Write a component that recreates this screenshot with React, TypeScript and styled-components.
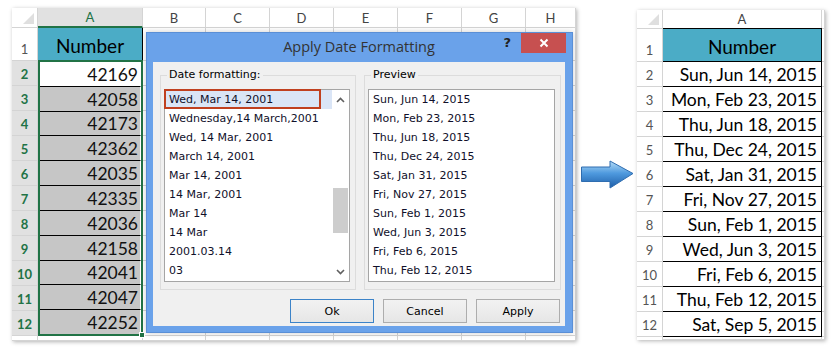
import React from "react";
import styled, { createGlobalStyle } from "styled-components";

const GlobalStyle = createGlobalStyle`
  html, body { margin: 0; padding: 0; background: #fff; }
  body { font-family: "Liberation Sans", Arial, sans-serif; }
  * { box-sizing: border-box; }
`;

const XL = `"Lato", "Open Sans", sans-serif`;
const WIN = `"DejaVu Sans", "Liberation Sans", sans-serif`;
const GREEN = "#217346";
const GRID = "#d4d4d4";

const Page = styled.div`
  display: flex;
  align-items: flex-start;
  padding: 8px 0 0 12px;
  width: 833px;
  height: 351px;
  overflow: hidden;
`;

const LeftArea = styled.div`
  position: relative;
  flex: none;
`;

const Sheet = styled.div<{ $cols: string; $rows: string; $mt?: number; $ml?: number }>`
  display: grid;
  grid-template-columns: ${(p) => p.$cols};
  grid-template-rows: ${(p) => p.$rows};
  background: #fff;
  box-shadow: 1px 1px 4px rgba(0, 0, 0, 0.3);
  margin-top: ${(p) => p.$mt ?? 0}px;
  margin-left: ${(p) => p.$ml ?? 0}px;
  flex: none;
  overflow: hidden;
`;

const Corner = styled.div`
  border-right: 1px solid ${GRID};
  border-bottom: 1px solid ${GRID};
  position: relative;
  background: #fff;
  &::after {
    content: "";
    position: absolute;
    right: 3px;
    bottom: 3px;
    border-left: 11px solid transparent;
    border-bottom: 11px solid #dfdfdf;
  }
`;

const ColHead = styled.div<{ $sel?: boolean }>`
  display: flex;
  align-items: center;
  justify-content: center;
  font-family: ${XL};
  font-size: 13px;
  color: ${(p) => (p.$sel ? GREEN : "#444")};
  background: ${(p) => (p.$sel ? "#e1e1e1" : "#fff")};
  border-right: 1px solid ${GRID};
  border-bottom: ${(p) => (p.$sel ? `2px solid ${GREEN}` : `1px solid ${GRID}`)};
`;

const RowHead = styled.div<{ $sel?: boolean }>`
  display: flex;
  align-items: flex-end;
  justify-content: center;
  padding-bottom: 3px;
  font-family: ${XL};
  font-size: 13px;
  font-weight: ${(p) => (p.$sel ? 700 : 400)};
  color: ${(p) => (p.$sel ? GREEN : "#555")};
  background: ${(p) => (p.$sel ? "#e1e1e1" : "#fff")};
  border-right: 1px solid ${GRID};
  border-bottom: 1px solid ${GRID};
`;

const Blank = styled.div`
  border-right: 1px solid ${GRID};
  border-bottom: 1px solid ${GRID};
`;

const TitleCell = styled.div`
  display: flex;
  align-items: center;
  justify-content: center;
  padding-top: 2px;
  background: #4bacc6;
  font-family: ${XL};
  font-size: 19px;
  color: #000;
  border-right: 1px solid #000;
`;

const Selection = styled.div`
  grid-column: 2;
  grid-row: 3 / span 11;
  position: relative;
  display: flex;
  flex-direction: column;
  border: 2px solid ${GREEN};
  margin: -1px 0 0 0;
`;

const NumCell = styled.div<{ $active?: boolean }>`
  flex: 1;
  display: flex;
  align-items: flex-end;
  justify-content: flex-end;
  padding: 0 2px 1px 0;
  font-family: ${XL};
  font-size: 17.5px;
  white-space: nowrap;
  color: #111;
  background: ${(p) => (p.$active ? "#fff" : "#c6c6c6")};
  border-right: 1px solid #fff;
  & + & {
    border-top: 1px solid #000;
  }
`;

const FillHandle = styled.div`
  position: absolute;
  right: -4px;
  bottom: -4px;
  width: 6px;
  height: 6px;
  background: ${GREEN};
  border: 1px solid #fff;
`;

const Table = styled.div`
  grid-column: 2;
  grid-row: 2 / span 12;
  display: flex;
  flex-direction: column;
  border: 1px solid #000;
  margin: -1px 0 0 -1px;
`;

const TableHead = styled.div`
  height: 33px;
  flex: none;
  display: flex;
  align-items: center;
  justify-content: center;
  padding-top: 2px;
  background: #4bacc6;
  font-family: ${XL};
  font-size: 19px;
  color: #000;
  border-bottom: 1px solid #000;
`;

const DateCell = styled.div`
  flex: 1;
  display: flex;
  align-items: flex-end;
  justify-content: flex-end;
  padding: 0 4px 1px 0;
  font-family: ${XL};
  font-size: 17.5px;
  white-space: nowrap;
  color: #000;
  & + & {
    border-top: 1px solid #000;
  }
`;

/* ---------- dialog ---------- */

const Dialog = styled.div`
  position: absolute;
  left: 134px;
  top: 24px;
  width: 427px;
  height: 301px;
  display: flex;
  flex-direction: column;
  background: #6aa2ea;
  border: 1px solid #5a8fd6;
  padding: 0 7px 6px 6px;
  box-shadow: 0 0 6px rgba(0, 0, 0, 0.2);
`;

const TitleBar = styled.div`
  height: 29px;
  flex: none;
  display: grid;
  grid-template-columns: 1fr auto 1fr;
  align-items: start;
`;

const Title = styled.div`
  font-family: "Open Sans", "Noto Sans", sans-serif;
  font-size: 14.5px;
  line-height: 28px;
  color: #333;
`;

const Controls = styled.div`
  justify-self: end;
  display: flex;
  align-items: flex-start;
  gap: 10px;
  margin-right: -1px;
`;

const Help = styled.div`
  font-family: ${WIN};
  font-weight: 700;
  font-size: 13px;
  color: #222;
  line-height: 20px;
`;

const Close = styled.div`
  width: 45px;
  height: 20px;
  background: #c75050;
  display: flex;
  align-items: center;
  justify-content: center;
`;

const Client = styled.div`
  flex: 1;
  background: #f0f0f0;
  display: flex;
  flex-direction: column;
  padding: 6px 4px 3px 7px;
`;

const Groups = styled.div`
  display: flex;
  gap: 8px;
`;

const Group = styled.fieldset<{ $w: number }>`
  width: ${(p) => p.$w}px;
  height: 222px;
  margin: 0;
  padding: 7px 5px 7px 3px;
  border: 1px solid #dcdcdc;
  min-width: 0;
`;

const Legend = styled.legend`
  font-family: ${WIN};
  font-size: 11px;
  line-height: 14px;
  color: #000;
  padding: 0 2px;
  margin-left: 3px;
`;

const ListBox = styled.div`
  height: 193px;
  border: 1px solid #a5a5a5;
  background: #fff;
  display: flex;
`;

const Items = styled.div`
  flex: 1;
  display: flex;
  flex-direction: column;
`;

const Item = styled.div<{ $sel?: boolean }>`
  position: relative;
  height: 19px;
  flex: none;
  padding-left: 4px;
  font-family: ${WIN};
  font-size: 11px;
  line-height: 19px;
  color: #10102a;
  white-space: nowrap;
  background: ${(p) => (p.$sel ? "#dae5f6" : "transparent")};
`;

const Mark = styled.div`
  position: absolute;
  left: -1px;
  top: -1px;
  width: 157px;
  height: 20px;
  border: 2px solid #c0401f;
`;

const ScrollBar = styled.div`
  width: 17px;
  flex: none;
  display: flex;
  flex-direction: column;
  background: #fff;
`;

const ScrollBtn = styled.div`
  height: 19px;
  flex: none;
  display: flex;
  align-items: center;
  justify-content: center;
`;

const Track = styled.div`
  flex: 1;
  display: flex;
  flex-direction: column;
`;

const Thumb = styled.div<{ $top: number; $h: number }>`
  margin: ${(p) => p.$top}px 1px 0 1px;
  height: ${(p) => p.$h}px;
  background: #cdcdcd;
`;

const ButtonRow = styled.div`
  display: flex;
  justify-content: flex-end;
  gap: 9px;
  margin-top: 9px;
  margin-right: 1px;
`;

const Button = styled.div<{ $default?: boolean }>`
  width: 84px;
  height: 24px;
  display: flex;
  align-items: center;
  justify-content: center;
  font-family: ${WIN};
  font-size: 11px;
  color: #000;
  background: linear-gradient(#f2f2f2, #e6e6e6);
  border: 1px solid ${(p) => (p.$default ? "#3c83c8" : "#adadad")};
`;

const ArrowWrap = styled.div`
  flex: none;
  margin: 152px 0 0 5px;
  width: 53px;
  height: 29px;
`;

const leftNums = [42169, 42058, 42173, 42362, 42035, 42335, 42036, 42158, 42041, 42047, 42252];
const formats = [
  "Wed, Mar 14, 2001",
  "Wednesday,14 March,2001",
  "Wed, 14 Mar, 2001",
  "March 14, 2001",
  "Mar 14, 2001",
  "14 Mar, 2001",
  "Mar 14",
  "14 Mar",
  "2001.03.14",
  "03",
];
const previews = [
  "Sun, Jun 14, 2015",
  "Mon, Feb 23, 2015",
  "Thu, Jun 18, 2015",
  "Thu, Dec 24, 2015",
  "Sat, Jan 31, 2015",
  "Fri, Nov 27, 2015",
  "Sun, Feb 1, 2015",
  "Wed, Jun 3, 2015",
  "Fri, Feb 6, 2015",
  "Thu, Feb 12, 2015",
];
const rightDates = [...previews, "Sat, Sep 5, 2015"];
const otherCols = ["B", "C", "D", "E", "F", "G", "H"];

const Chevron = ({ up }: { up?: boolean }) => (
  <svg width="9" height="6" viewBox="0 0 9 6">
    <path
      d={up ? "M1 5 L4.5 1.5 L8 5" : "M1 1 L4.5 4.5 L8 1"}
      fill="none"
      stroke="#606060"
      strokeWidth="1.6"
    />
  </svg>
);

const Arrow = () => (
  <svg width="53" height="29" viewBox="0 0 53 29">
    <defs>
      <linearGradient id="ag" x1="0" y1="0" x2="0" y2="1">
        <stop offset="0" stopColor="#b5dcf7" />
        <stop offset="0.45" stopColor="#4f9ade" />
        <stop offset="1" stopColor="#1d5ea9" />
      </linearGradient>
    </defs>
    <path
      d="M0.5 7 H29 V1 L52 13.5 L29 28 V21.5 H0.5 Z"
      fill="url(#ag)"
      stroke="#2f6db0"
      strokeWidth="1"
      strokeLinejoin="round"
    />
  </svg>
);

const LeftSheet = () => (
  <Sheet $cols="26px 105px 63px 64px 64px 64px 64px 64px 50px" $rows="20px 33px repeat(11, 25px) 5px">
    <Corner />
    <ColHead $sel>A</ColHead>
    {otherCols.map((c) => (
      <ColHead key={c}>{c}</ColHead>
    ))}
    <RowHead>1</RowHead>
    <TitleCell>Number</TitleCell>
    {otherCols.map((c) => (
      <Blank key={"r1" + c} />
    ))}
    <Selection>
      {leftNums.map((n, i) => (
        <NumCell key={n} $active={i === 0}>
          {n}
        </NumCell>
      ))}
      <FillHandle />
    </Selection>
    {leftNums.map((n, i) => (
      <React.Fragment key={"row" + i}>
        <RowHead $sel>{i + 2}</RowHead>
        {otherCols.map((c) => (
          <Blank key={c} />
        ))}
      </React.Fragment>
    ))}
    <RowHead />
    <Blank />
    {otherCols.map((c) => (
      <Blank key={"r13" + c} />
    ))}
  </Sheet>
);

const DateDialog = () => (
  <Dialog>
    <TitleBar>
      <span />
      <Title>Apply Date Formatting</Title>
      <Controls>
        <Help>?</Help>
        <Close>
          <svg width="10" height="10" viewBox="0 0 10 10">
            <path d="M1.5 1.5 L8.5 8.5 M8.5 1.5 L1.5 8.5" stroke="#fff" strokeWidth="2" />
          </svg>
        </Close>
      </Controls>
    </TitleBar>
    <Client>
      <Groups>
        <Group $w={196}>
          <Legend>Date formatting:</Legend>
          <ListBox>
            <Items>
              {formats.map((f, i) => (
                <Item key={f} $sel={i === 0}>
                  {f}
                  {i === 0 && <Mark />}
                </Item>
              ))}
            </Items>
            <ScrollBar>
              <ScrollBtn>
                <Chevron up />
              </ScrollBtn>
              <Track>
                <Thumb $top={79} $h={45} />
              </Track>
              <ScrollBtn>
                <Chevron />
              </ScrollBtn>
            </ScrollBar>
          </ListBox>
        </Group>
        <Group $w={197}>
          <Legend>Preview</Legend>
          <ListBox>
            <Items>
              {previews.map((p) => (
                <Item key={p}>{p}</Item>
              ))}
            </Items>
          </ListBox>
        </Group>
      </Groups>
      <ButtonRow>
        <Button $default>Ok</Button>
        <Button>Cancel</Button>
        <Button>Apply</Button>
      </ButtonRow>
    </Client>
  </Dialog>
);

const RightSheet = () => (
  <Sheet $cols="26px 159px 3px" $rows="19px 33px repeat(11, 25px) 3px" $mt={2} $ml={3}>
    <Corner />
    <ColHead>A</ColHead>
    <Blank />
    <Table>
      <TableHead>Number</TableHead>
      {rightDates.map((d) => (
        <DateCell key={d}>{d}</DateCell>
      ))}
    </Table>
    {[1, ...rightDates.map((_, i) => i + 2)].map((n) => (
      <React.Fragment key={"rr" + n}>
        <RowHead>{n}</RowHead>
        <Blank />
      </React.Fragment>
    ))}
    <RowHead />
    <Blank />
    <Blank />
  </Sheet>
);

export default function App() {
  return (
    <>
      <GlobalStyle />
      <Page>
        <LeftArea>
          <LeftSheet />
          <DateDialog />
        </LeftArea>
        <ArrowWrap>
          <Arrow />
        </ArrowWrap>
        <RightSheet />
      </Page>
    </>
  );
}
